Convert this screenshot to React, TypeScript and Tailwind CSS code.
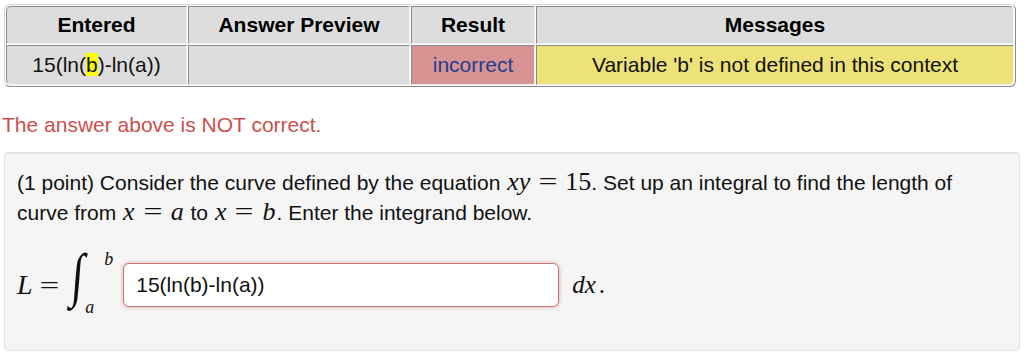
import React from "react";

const serif = { fontFamily: '"Liberation Serif", "DejaVu Serif", serif' };

function M({ children }: { children: React.ReactNode }) {
  return (
    <span className="text-[26px] italic leading-[0] mx-[1px]" style={serif}>
      {children}
    </span>
  );
}
function N({ children }: { children: React.ReactNode }) {
  return (
    <span className="text-[26px] leading-[0]" style={serif}>
      {children}
    </span>
  );
}
function Eq() {
  return (
    <span
      className="inline-block text-[25px] leading-[0] mx-[10px] scale-x-[1.35]"
      style={serif}
    >
      =
    </span>
  );
}

export default function App() {
  const th =
    "border border-t-[#8a8a8a] border-l-[#8a8a8a] border-b-[#f0f0f0] border-r-[#f0f0f0] bg-[#dddddd] h-[38px] p-0 text-center font-bold text-[21px] text-black";
  const td =
    "border border-t-[#8a8a8a] border-l-[#8a8a8a] border-b-[#f0f0f0] border-r-[#f0f0f0] h-[40px] p-0 text-center text-[21px]";
  return (
    <div
      className="w-[1024px] h-[360px] bg-white overflow-hidden pt-[4px] px-[4px]"
      style={{ fontFamily: '"Liberation Sans", Arial, sans-serif' }}
    >
      <table className="w-[1012px] table-fixed border-separate border-spacing-[1px] border border-t-[#d4d4d4] border-l-[#d4d4d4] border-b-[#8a8a8a] border-r-[#8a8a8a] rounded-[6px]">
        <colgroup>
          <col className="w-[181px]" />
          <col className="w-[222px]" />
          <col className="w-[124px]" />
          <col className="w-[478px]" />
        </colgroup>
        <thead>
          <tr>
            <th className={th + " rounded-tl-[5px]"}>Entered</th>
            <th className={th}>Answer Preview</th>
            <th className={th}>Result</th>
            <th className={th + " rounded-tr-[5px]"}>Messages</th>
          </tr>
        </thead>
        <tbody>
          <tr>
            <td className={td + " bg-[#dddddd] text-[#111] rounded-bl-[5px]"}>
              15(ln(<span className="bg-[#ffff00]">b</span>)-ln(a))
            </td>
            <td className={td + " bg-[#dddddd]"}></td>
            <td className={td + " bg-[#d79292] text-[#1f3f8f]"}>incorrect</td>
            <td className={td + " bg-[#ede277] text-[#111] rounded-br-[5px]"}>
              Variable 'b' is not defined in this context
            </td>
          </tr>
        </tbody>
      </table>

      <div className="mt-[26px] text-[21px] leading-[23px] text-[#c9504b] -ml-[2px]">
        The answer above is NOT correct.
      </div>

      <div className="mt-[16px] h-[199px] rounded-[4px] border border-[#e3e3e3] bg-[#f5f5f5] shadow-[inset_0_1px_1px_rgba(0,0,0,0.05)] pl-[12px] pr-[12px] pt-[15px]">
        <div className="text-[21px] leading-[30px] text-[#111]">
          (1 point) Consider the curve defined by the equation <M>xy</M>
          <Eq />
          <N>15</N>. Set up an integral to find the length of
          <br />
          curve from <M>x</M>
          <Eq />
          <M>a</M> to <M>x</M>
          <Eq />
          <M>b</M>. Enter the integrand below.
        </div>

        <div className="mt-[22px] flex items-center h-[70px]">
          <span className="text-[28px] italic text-[#111]" style={serif}>
            L
          </span>
          <span
            className="ml-[9px] inline-block text-[26px] text-[#111] scale-x-[1.35]"
            style={serif}
          >
            =
          </span>
          <div className="relative ml-[7px] w-[60px] h-[70px]">
            <span
              className="absolute left-[11px] top-[-4px] text-[44px] leading-none text-[#111] origin-top [transform:scaleY(1.35)_skewX(-6deg)]"
              style={serif}
            >
              ∫
            </span>
            <span
              className="absolute left-[41px] top-[-4px] text-[18px] italic text-[#111]"
              style={serif}
            >
              b
            </span>
            <span
              className="absolute left-[22px] top-[44px] text-[18px] italic text-[#111]"
              style={serif}
            >
              a
            </span>
          </div>
          <div className="ml-[0px] w-[436px] h-[44px] rounded-[6px] border border-[#c87573] bg-white shadow-[0_0_4px_rgba(185,74,72,0.45)] flex items-center pl-[12px] text-[21px] text-[#111]">
            15(ln(b)-ln(a))
          </div>
          <span className="ml-[13px] text-[25px] italic text-[#111]" style={serif}>
            dx
          </span>
          <span className="text-[25px] text-[#111] ml-[3px]" style={serif}>
            .
          </span>
        </div>
      </div>
    </div>
  );
}
